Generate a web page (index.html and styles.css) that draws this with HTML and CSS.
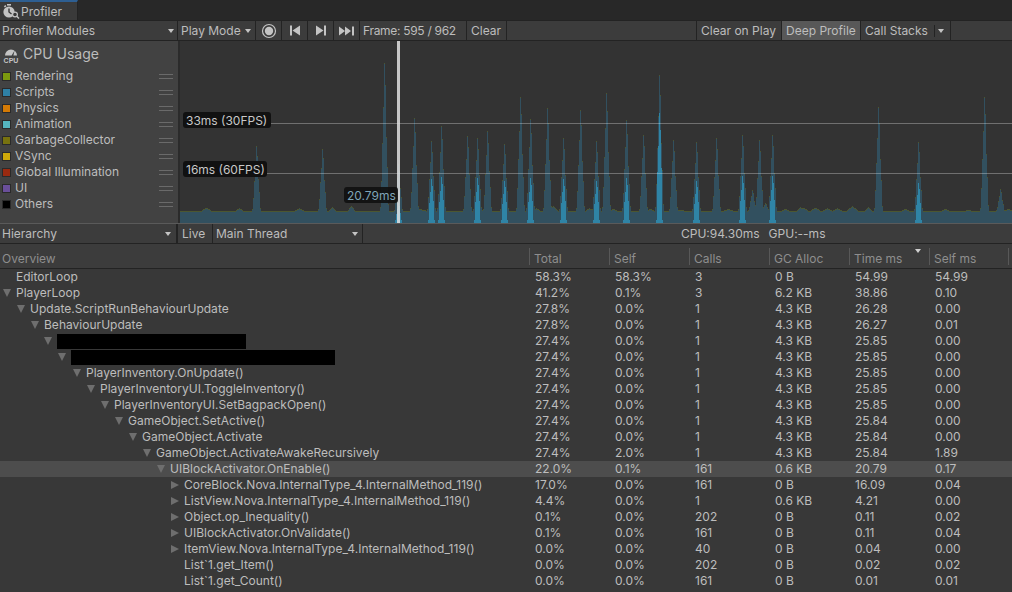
FILE: index.html
```html
<!DOCTYPE html>
<html lang="en">
<head>
<meta charset="utf-8">
<title>Profiler</title>
<link rel="stylesheet" href="styles.css">
</head>
<body>
<div class="window">
  <div class="tabbar">
    <div class="tab">
      <svg class="tab-icon" width="17" height="15" viewBox="0 0 17 15">
        <rect x="4" y="0" width="4" height="1.6" fill="#c4c4c4"/>
        <rect x="1.2" y="1.6" width="2" height="1.6" transform="rotate(-40 2 2.4)" fill="#c4c4c4"/>
        <circle cx="6" cy="8" r="5.6" fill="#c4c4c4"/>
        <path d="M6 4.5V8L8.5 10" fill="none" stroke="#383838" stroke-width="1.4"/>
        <circle cx="12" cy="10.5" r="2.4" fill="#383838" stroke="#c4c4c4" stroke-width="1.2"/>
        <path d="M13.8 12.3L16 14.5" stroke="#c4c4c4" stroke-width="1.4"/>
      </svg>
      <span>Profiler</span>
    </div>
  </div>

  <div class="toolbar">
    <div class="tool dropdown modules"><span>Profiler Modules</span><i class="caret"></i></div>
    <div class="tool playmode"><span>Play Mode</span><i class="caret"></i></div>
    <div class="tool icon-btn record">
      <svg width="16" height="16" viewBox="0 0 16 16"><circle cx="8" cy="8" r="6.5" fill="none" stroke="#c4c4c4" stroke-width="1.2"/><circle cx="8" cy="8" r="4.2" fill="#c4c4c4"/></svg>
    </div>
    <div class="tool icon-btn">
      <svg width="12" height="11" viewBox="0 0 12 11"><rect x="1" y="0.5" width="2" height="10" fill="#c4c4c4"/><path d="M11 0.5V10.500L3.500 5.500Z" fill="#c4c4c4"/></svg>
    </div>
    <div class="tool icon-btn">
      <svg width="12" height="11" viewBox="0 0 12 11"><rect x="9" y="0.5" width="2" height="10" fill="#c4c4c4"/><path d="M1 0.500V10.500L8.500 5.500Z" fill="#c4c4c4"/></svg>
    </div>
    <div class="tool icon-btn">
      <svg width="16" height="10" viewBox="0 0 16 10"><path d="M0 0.500V9.500L6 5ZM6 0.500V9.500L12 5Z" fill="#c4c4c4"/><rect x="13" y="0.500" width="2" height="9" fill="#c4c4c4"/></svg>
    </div>
    <div class="tool frame">Frame: 595 / 962</div>
    <div class="tool clear">Clear</div>
    <div class="spacer"></div>
    <div class="tool clearplay edge">Clear on Play</div>
    <div class="tool deep">Deep Profile</div>
    <div class="tool stacks"><span>Call Stacks</span><b class="split"></b><i class="caret"></i></div>
    <div class="tail"></div>
  </div>

  <div class="chart-row">
    <aside class="legend">
      <div class="legend-title">
        <svg class="cpu-icon" width="16" height="17" viewBox="0 0 16 17">
          <path d="M2 9.500A6 6 0 1 1 14 9.500H10.400L11.600 4.500L8.600 9.500Z" fill="#c4c4c4"/>
          <text class="cpu-text" x="8" y="16.500" text-anchor="middle">CPU</text>
        </svg>
        <span>CPU Usage</span>
      </div>
      <div class="lg"><i class="sw rendering"></i><span>Rendering</span><b class="grip"></b></div>
      <div class="lg"><i class="sw scripts"></i><span>Scripts</span><b class="grip"></b></div>
      <div class="lg"><i class="sw physics"></i><span>Physics</span><b class="grip"></b></div>
      <div class="lg"><i class="sw animation"></i><span>Animation</span><b class="grip"></b></div>
      <div class="lg"><i class="sw garbage"></i><span>GarbageCollector</span><b class="grip"></b></div>
      <div class="lg"><i class="sw vsync"></i><span>VSync</span><b class="grip"></b></div>
      <div class="lg"><i class="sw gi"></i><span>Global Illumination</span><b class="grip"></b></div>
      <div class="lg"><i class="sw ui"></i><span>UI</span><b class="grip"></b></div>
      <div class="lg"><i class="sw others"></i><span>Others</span><b class="grip"></b></div>
    </aside>
    <div class="graph">
      <svg id="plot" class="plot" width="832" height="182" viewBox="180 41 832 182"></svg>
      <div class="fps-line l33"></div>
      <div class="fps-line l16"></div>
      <div class="selected-bar"></div>
      <div class="tag t33">33ms (30FPS)</div>
      <div class="tag t16">16ms (60FPS)</div>
      <div class="tag tsel">20.79ms</div>
    </div>
  </div>

  <div class="subbar">
    <div class="tool dropdown hierarchy"><span>Hierarchy</span><i class="caret"></i></div>
    <div class="tool live">Live</div>
    <div class="tool dropdown thread"><span>Main Thread</span><i class="caret"></i></div>
    <div class="stats"><span class="cpu">CPU:94.30ms</span><span class="gpu">GPU:--ms</span></div>
  </div>

  <div class="thead">
    <div class="th first">Overview</div>
    <div class="th">Total</div>
    <div class="th">Self</div>
    <div class="th">Calls</div>
    <div class="th">GC Alloc</div>
    <div class="th sorted">Time ms<i class="sort"></i></div>
    <div class="th last">Self ms</div>
  </div>

  <div class="tbody">
    <div class="row"><div class="name d0"><span>EditorLoop</span></div><div>58.3%</div><div>58.3%</div><div>3</div><div>0 B</div><div>54.99</div><div>54.99</div></div>
    <div class="row"><div class="name d0"><i class="tri open"></i><span>PlayerLoop</span></div><div>41.2%</div><div>0.1%</div><div>3</div><div>6.2 KB</div><div>38.86</div><div>0.10</div></div>
    <div class="row"><div class="name d1"><i class="tri open"></i><span>Update.ScriptRunBehaviourUpdate</span></div><div>27.8%</div><div>0.0%</div><div>1</div><div>4.3 KB</div><div>26.28</div><div>0.00</div></div>
    <div class="row"><div class="name d2"><i class="tri open"></i><span>BehaviourUpdate</span></div><div>27.8%</div><div>0.0%</div><div>1</div><div>4.3 KB</div><div>26.27</div><div>0.01</div></div>
    <div class="row"><div class="name d3"><i class="tri open"></i><b class="redact r1"></b></div><div>27.4%</div><div>0.0%</div><div>1</div><div>4.3 KB</div><div>25.85</div><div>0.00</div></div>
    <div class="row"><div class="name d4"><i class="tri open"></i><b class="redact r2"></b></div><div>27.4%</div><div>0.0%</div><div>1</div><div>4.3 KB</div><div>25.85</div><div>0.00</div></div>
    <div class="row"><div class="name d5"><i class="tri open"></i><span>PlayerInventory.OnUpdate()</span></div><div>27.4%</div><div>0.0%</div><div>1</div><div>4.3 KB</div><div>25.85</div><div>0.00</div></div>
    <div class="row"><div class="name d6"><i class="tri open"></i><span>PlayerInventoryUI.ToggleInventory()</span></div><div>27.4%</div><div>0.0%</div><div>1</div><div>4.3 KB</div><div>25.85</div><div>0.00</div></div>
    <div class="row"><div class="name d7"><i class="tri open"></i><span>PlayerInventoryUI.SetBagpackOpen()</span></div><div>27.4%</div><div>0.0%</div><div>1</div><div>4.3 KB</div><div>25.85</div><div>0.00</div></div>
    <div class="row"><div class="name d8"><i class="tri open"></i><span>GameObject.SetActive()</span></div><div>27.4%</div><div>0.0%</div><div>1</div><div>4.3 KB</div><div>25.84</div><div>0.00</div></div>
    <div class="row"><div class="name d9"><i class="tri open"></i><span>GameObject.Activate</span></div><div>27.4%</div><div>0.0%</div><div>1</div><div>4.3 KB</div><div>25.84</div><div>0.00</div></div>
    <div class="row"><div class="name d10"><i class="tri open"></i><span>GameObject.ActivateAwakeRecursively</span></div><div>27.4%</div><div>2.0%</div><div>1</div><div>4.3 KB</div><div>25.84</div><div>1.89</div></div>
    <div class="row selected"><div class="name d11"><i class="tri open"></i><span>UIBlockActivator.OnEnable()</span></div><div>22.0%</div><div>0.1%</div><div>161</div><div>0.6 KB</div><div>20.79</div><div>0.17</div></div>
    <div class="row"><div class="name d12"><i class="tri closed"></i><span>CoreBlock.Nova.InternalType_4.InternalMethod_119()</span></div><div>17.0%</div><div>0.0%</div><div>161</div><div>0 B</div><div>16.09</div><div>0.04</div></div>
    <div class="row"><div class="name d12"><i class="tri closed"></i><span>ListView.Nova.InternalType_4.InternalMethod_119()</span></div><div>4.4%</div><div>0.0%</div><div>1</div><div>0.6 KB</div><div>4.21</div><div>0.00</div></div>
    <div class="row"><div class="name d12"><i class="tri closed"></i><span>Object.op_Inequality()</span></div><div>0.1%</div><div>0.0%</div><div>202</div><div>0 B</div><div>0.11</div><div>0.02</div></div>
    <div class="row"><div class="name d12"><i class="tri closed"></i><span>UIBlockActivator.OnValidate()</span></div><div>0.1%</div><div>0.0%</div><div>161</div><div>0 B</div><div>0.11</div><div>0.04</div></div>
    <div class="row"><div class="name d12"><i class="tri closed"></i><span>ItemView.Nova.InternalType_4.InternalMethod_119()</span></div><div>0.0%</div><div>0.0%</div><div>40</div><div>0 B</div><div>0.04</div><div>0.00</div></div>
    <div class="row"><div class="name d12"><span>List`1.get_Item()</span></div><div>0.0%</div><div>0.0%</div><div>202</div><div>0 B</div><div>0.02</div><div>0.02</div></div>
    <div class="row"><div class="name d12"><span>List`1.get_Count()</span></div><div>0.0%</div><div>0.0%</div><div>161</div><div>0 B</div><div>0.01</div><div>0.01</div></div>
  </div>
</div>
<script src="graph.js"></script>
</body>
</html>
```

FILE: styles.css
```css
* { box-sizing: border-box; }
html, body { margin: 0; height: 100%; overflow: hidden; }
body {
  background: #383838;
  color: #bdbdbd;
  font: 12px/16px Inter, "Liberation Sans", sans-serif;
}
.window { width: 1012px; height: 592px; display: flex; flex-direction: column; overflow: hidden; }

.tabbar { height: 20px; flex: none; background: #282828; display: flex; }
.tab {
  width: 78px; background: #3a3a3a; border-top: 2px solid #2e5f92; border-right: 1px solid #232323;
  display: flex; align-items: center; padding: 1px 0 0 3px; gap: 1px; font-size: 12px;
}
.tab-icon { flex: none; }

.toolbar { height: 21px; flex: none; display: flex; background: #3c3c3c; border-top: 1px solid #232323; border-bottom: 1px solid #232323; }
.tool { display: flex; align-items: center; flex: none; border-right: 1px solid #232323; white-space: nowrap; position: relative; }
.caret { width: 0; height: 0; border-left: 3.500px solid transparent; border-right: 3.500px solid transparent; border-top: 4px solid #c4c4c4; flex: none; }
.dropdown { justify-content: space-between; }
.modules { width: 178px; padding: 0 3px 0 2px; }
.playmode { width: 78px; padding: 0 4px 0 3px; justify-content: space-between; }
.icon-btn { width: 26px; justify-content: center; }
.frame { width: 107px; padding-left: 3px; letter-spacing: -.3px; }
.clear { width: 40px; padding-left: 4px; }
.spacer { flex: 1; }
.tail { width: 61px; flex: none; }
.edge { border-left: 1px solid #232323; }
.clearplay { width: 86px; padding-left: 4px; }
.deep { width: 79px; padding-left: 4px; background: #585858; }
.stacks { width: 90px; padding-left: 4px; }
.stacks .split { position: absolute; left: 73px; top: 4px; width: 1px; height: 12px; background: #232323; }
.stacks .caret { position: absolute; left: 77px; top: 8px; }

.chart-row { height: 182px; flex: none; display: flex; background: #333; }
.legend { width: 180px; flex: none; background: #424242; border-right: 2px solid #2b2b2b; }
.legend-title { height: 27px; display: flex; align-items: center; padding: 0 0 2px 3px; gap: 4px; font-size: 14px; }
.cpu-icon { flex: none; margin-top: 1px; }
.cpu-text { font: 700 7px "Liberation Sans", sans-serif; fill: #c4c4c4; }
.lg { height: 16px; display: flex; align-items: center; padding: 0 5px 0 3px; }
.lg span { flex: 1; margin-left: 5px; }
.sw { width: 7px; height: 7px; box-shadow: 0 0 0 1px #2a2a2a; flex: none; }
.rendering { background: #7c9a0f; }
.scripts { background: #2f80a5; }
.physics { background: #d47a05; }
.animation { background: #55b5c0; }
.garbage { background: #77720f; }
.vsync { background: #cfa90a; }
.gi { background: #992a10; }
.ui { background: #6a4f9a; }
.others { background: #000; }
.grip { width: 14px; height: 5px; border-top: 1px solid #6a6a6a; border-bottom: 1px solid #6a6a6a; flex: none; }

.graph { flex: 1; position: relative; overflow: hidden; }
.plot { display: block; }
.fps-line { position: absolute; left: 10px; right: 0; height: 1px; background: rgba(255,255,255,.3); }
.l33 { top: 82px; }
.l16 { top: 132px; }
.selected-bar { position: absolute; left: 217px; top: 0; bottom: 0; width: 3px; background: rgba(226,226,226,.85); }
.tag { position: absolute; height: 16px; line-height: 17px; padding: 0 3px; background: #111; border-radius: 3px; white-space: nowrap; color: #c8c8c8; }
.t33 { left: 3px; top: 71px; width: 88px; }
.t16 { left: 3px; top: 120px; width: 84px; }
.tsel { left: 164px; top: 146px; width: 54px; color: #7fa5b8; background: rgba(15,15,15,.9); }

.subbar { height: 21px; flex: none; display: flex; background: #3c3c3c; border-top: 1px solid #5a5a5a; border-bottom: 1px solid #232323; }
.hierarchy { width: 178px; padding: 0 5px 0 2px; border-right: 2px solid #232323; }
.live { width: 35px; padding-left: 4px; }
.thread { width: 150px; padding: 0 4px 0 3px; }
.stats { flex: 1; display: flex; padding-left: 318px; align-items: center; }
.gpu { margin-left: 9px; }

.thead { height: 25px; flex: none; display: grid; grid-template-columns: 529px repeat(6, 80px) 1fr; background: #3c3c3c; border-bottom: 1px solid #232323; color: #8e8e8e; }
.th { position: relative; padding: 7px 0 0 5px; }
.th::before { content: ""; position: absolute; left: 0; top: 4px; height: 17px; width: 1px; background: #585858; }
.th.first { padding-left: 2px; }
.th.first::before { display: none; }
.th.last::after { content: ""; position: absolute; right: 0; top: 4px; height: 17px; width: 1px; background: #585858; }
.sort { position: absolute; right: 8px; top: 5px; width: 0; height: 0; border-left: 3px solid transparent; border-right: 3px solid transparent; border-top: 4px solid #d0d0d0; }

.tbody { flex: 1; background: #383838; }
.row { height: 16px; display: grid; grid-template-columns: 535px repeat(5, 80px) 1fr; white-space: nowrap; }
.row.selected { background: #4d4d4d; }
.name { display: flex; align-items: center; position: relative; letter-spacing: .02px; }
.name span, .redact { flex: none; }
.tri { position: absolute; width: 0; height: 0; top: 4px; }
.tri.open { border-left: 4.500px solid transparent; border-right: 4.500px solid transparent; border-top: 8px solid #6e6e6e; margin-left: -13px; }
.tri.closed { border-top: 4.500px solid transparent; border-bottom: 4.500px solid transparent; border-left: 8px solid #6e6e6e; margin-left: -13px; top: 3.500px; }
.d0 { padding-left: 16px; }
.d1 { padding-left: 30px; }
.d2 { padding-left: 44px; }
.d3 { padding-left: 57px; }
.d4 { padding-left: 71px; }
.d5 { padding-left: 86px; }
.d6 { padding-left: 100px; }
.d7 { padding-left: 114px; }
.d8 { padding-left: 128px; }
.d9 { padding-left: 142px; }
.d10 { padding-left: 156px; }
.d11 { padding-left: 170px; }
.d12 { padding-left: 184px; }
.redact { background: #000; height: 15px; display: block; }
.r1 { width: 189px; }
.r2 { width: 264px; }
```

FILE: graph.js
```js
// Draws the CPU usage history: one column per pixel, from spike data.
(function () {
  var X0 = 180, W = 832, BASE = 212, BOTTOM = 223;
  // [x, top of the dark spike, top of the bright spike or 0]
  var spikes = [
    [256,147,0],[322,150,0],[384,64,0],[398,165,203],[414,119,0],[431,142,179],[441,127,177],
    [467,137,0],[477,139,178],[487,132,0],[504,145,181],[520,98,0],[530,120,178],[547,109,0],
    [563,139,179],[580,111,0],[596,142,181],[606,94,0],[626,121,178],[643,136,0],[659,76,113],
    [673,141,0],[696,143,181],[716,139,0],[742,136,176],[752,191,0],[759,141,0],[765,204,0],
    [772,136,176],[878,108,0],[918,143,183],[984,98,0],[1000,190,0]
  ];
  // [x, height, half width]
  var bumps = [
    [206,3,5],[239,3,3],[299,3,4],[332,4,3],[351,5,3],[420,2,6],[484,2,3],[536,3,3],
    [613,2,3],[589,3,3],[553,5,4],[650,2,4],[680,1,5],[728,2,5],[800,4,3],[785,2,4],[803,3,5],
    [815,3,5],[827,3,4],[837,3,4],[852,5,5],[868,4,3],[905,2,3],[945,2,3],[968,1,4],[1008,2,4]
  ];
  var left = [1, .7, .46, .2, .03];
  var right = [1, .85, .5, .3, .05];
  var dark = [], blue = [];
  var i;
  for (i = 0; i < W; i++) {
    dark[i] = BASE;
    blue[i] = BOTTOM;
  }
  bumps.forEach(function (b) {
    for (var d = -b[2]; d <= b[2]; d++) {
      var k = b[0] - X0 + d;
      if (k < 0 || k >= W) continue;
      var y = BASE - Math.round(b[1] * (1 - Math.abs(d) / (b[2] + 1)));
      dark[k] = Math.min(dark[k], y);
    }
  });
  spikes.forEach(function (s) {
    for (var d = -4; d <= 4; d++) {
      var k = s[0] - X0 + d;
      if (k < 0 || k >= W) continue;
      var p = d < 0 ? left[-d] : right[d];
      dark[k] = Math.min(dark[k], Math.round(BASE - (BASE - s[1]) * p));
      if (s[2] && Math.abs(d) <= 3) {
        var by = Math.round(BOTTOM - (BOTTOM - s[2]) * p);
        if (Math.abs(d) === 3) by = BOTTOM - 3;
        if (Math.abs(d) === 2) by = Math.min(by, BOTTOM - 8);
        blue[k] = Math.min(blue[k], by);
      }
    }
  });
  function steps(arr, off) {
    var d = "M" + X0 + " " + BOTTOM;
    for (var n = 0; n < W; n++) {
      d += "V" + (arr[n] + off) + "H" + (X0 + n + 1);
    }
    return d + "V" + BOTTOM + "Z";
  }
  var svg = document.getElementById("plot");
  function add(d, fill) {
    var p = document.createElementNS("http://www.w3.org/2000/svg", "path");
    p.setAttribute("d", d);
    p.setAttribute("fill", fill);
    p.setAttribute("shape-rendering", "crispEdges");
    svg.appendChild(p);
  }
  add(steps(dark, -1), "#4c5730");
  add(steps(dark, 0), "#32505f");
  add(steps(blue, 0), "#2f84a6");
})();
```
